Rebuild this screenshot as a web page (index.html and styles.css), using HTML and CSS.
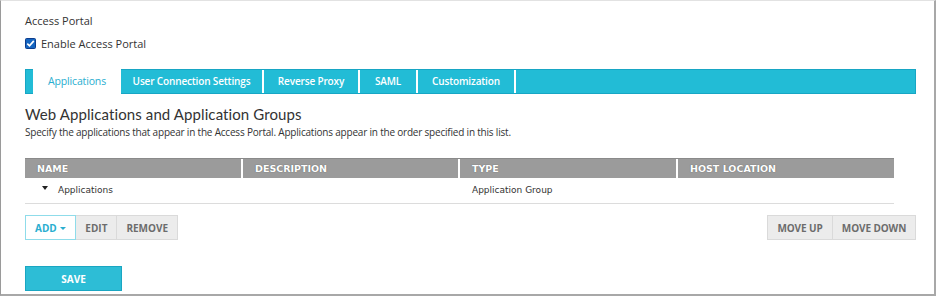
FILE: index.html
```html
<!DOCTYPE html>
<html>
<head>
<meta charset="utf-8">
<link rel="stylesheet" href="styles.css">
</head>
<body>
<div class="frame">
  <div class="title">Access Portal</div>
  <label class="check"><span class="box"><svg width="11" height="11" viewBox="0 0 11 11"><rect x="0.5" y="0.5" width="10" height="10" rx="1" fill="#1565c0" stroke="#0d3c8c"/><path d="M2.3 5.6 L4.5 7.8 L8.8 2.9" fill="none" stroke="#fff" stroke-width="1.7"/></svg></span>Enable Access Portal</label>

  <div class="tabs">
    <div class="tab active t1">Applications</div>
    <div class="tab t2">User Connection Settings</div>
    <div class="tab t3">Reverse Proxy</div>
    <div class="tab t4">SAML</div>
    <div class="tab t5">Customization</div>
  </div>

  <h2 class="heading">Web Applications and Application Groups</h2>
  <p class="desc">Specify the applications that appear in the Access Portal. Applications appear in the order specified in this list.</p>

  <div class="table">
    <div class="thead">
      <div class="th c1">NAME</div>
      <div class="th c2">DESCRIPTION</div>
      <div class="th c3">TYPE</div>
      <div class="th c4">HOST LOCATION</div>
    </div>
    <div class="row">
      <div class="td c1"><span class="caret"></span>Applications</div>
      <div class="td c2"></div>
      <div class="td c3">Application Group</div>
      <div class="td c4"></div>
    </div>
  </div>

  <div class="actions">
    <div class="group">
      <button class="btn add">ADD <span class="dcaret"></span></button>
      <button class="btn">EDIT</button>
      <button class="btn">REMOVE</button>
    </div>
    <div class="group">
      <button class="btn up">MOVE UP</button>
      <button class="btn down">MOVE DOWN</button>
    </div>
  </div>

  <button class="save">SAVE</button>
</div>
</body>
</html>
```
FILE: styles.css
```css
* { box-sizing: border-box; }
html, body { margin: 0; padding: 0; background: #fff; }
.frame {
  width: 936px;
  height: 296px;
  border-left: 1px solid #9a9a9a;
  border-top: 1px solid #e2e2e2;
  border-right: 2px solid #a8a8a8;
  border-bottom: 2px solid #a8a8a8;
  padding: 12px 18px 0 24px;
  font-family: "Open Sans", sans-serif;
  color: #333;
}
.title { font-size: 11px; line-height: 15px; }
.check {
  display: flex; align-items: center;
  margin-top: 8px;
  font-size: 11px; line-height: 15px;
}
.box { display: inline-flex; width: 11px; height: 11px; margin-right: 5px; }
.tabs {
  display: flex;
  margin-top: 18px;
  height: 25px;
  background: #22bcd6;
  border: 1px solid #17a6c4;
  padding-left: 7px;
}
.tab {
  color: #fff;
  font-size: 10px;
  font-weight: 600;
  letter-spacing: -0.15px;
  line-height: 23px;
  text-align: center;
  border-right: 2px solid #fff;
}
.t1 { width: 88px; }
.t2 { width: 143px; }
.t3 { width: 96px; }
.t4 { width: 58px; }
.t5 { width: 98px; }
.tab.active {
  background: #fff;
  color: #2aaed0;
  font-weight: 400;
  font-size: 10.5px;
  border-right: none;
  margin-top: -1px;
  margin-bottom: -1px;
  line-height: 25px;
}
.heading {
  margin: 10px 0 0;
  font-family: "Lato", sans-serif;
  font-weight: 400;
  font-size: 15px;
  letter-spacing: 0.1px;
  line-height: 20px;
  color: #333;
}
.desc { margin: 1px 0 0; font-size: 10px; letter-spacing: -0.2px; line-height: 14px; }
.table { width: 869px; margin-top: 19px; font-family: "DejaVu Sans", Verdana, sans-serif; }
.thead { display: flex; background: #9b9b9b; height: 20px; border-top: 1px solid #8a8a8a; }
.th {
  color: #fff; font-weight: 700; font-size: 9.5px; line-height: 19px;
  padding-left: 12px; border-right: 2px solid #fff;
  text-shadow: 0 0 1px #555;
}
.th.c4 { border-right: none; }
.c1 { width: 218px; }
.c2 { width: 217px; }
.c3 { width: 218px; }
.c4 { flex: 1; }
.row { display: flex; height: 26px; border-bottom: 1px solid #dcdcdc; }
.td { font-size: 9px; line-height: 23px; color: #333; padding-left: 12px; display: flex; align-items: center; }
.td.c1 { padding-left: 17px; }
.caret {
  width: 0; height: 0; margin-right: 10px; margin-top: -6px;
  border-left: 3.5px solid transparent; border-right: 3.5px solid transparent;
  border-top: 4px solid #222;
}
.actions { display: flex; justify-content: space-between; margin-top: 11px; }
.group { display: flex; }
.btn {
  font-family: "Open Sans", sans-serif;
  font-size: 10px; font-weight: 700; color: #6c6c6c;
  background: #ececec; border: 1px solid #dadada; border-left-width: 0;
  height: 25px; padding: 0 9px; margin: 0;
}
.group .btn:first-child { border-left-width: 1px; }
.btn.up { width: 66px; padding: 0; letter-spacing: -0.1px; }
.btn.down { width: 83px; padding: 0; letter-spacing: -0.1px; }
.btn.add { background: #fff; border: 1px solid #8fdcea; color: #2aaed0; padding: 0 9px; }
.dcaret {
  display: inline-block; width: 0; height: 0; vertical-align: middle; margin-left: 1px;
  border-left: 3px solid transparent; border-right: 3px solid transparent; border-top: 3px solid #2aaed0;
}
.save {
  display: block; margin-top: 26px;
  width: 97px; height: 25px;
  background: #2dbdd6; border: 1px solid #1aa6c2;
  color: #fff; font-family: "Open Sans", sans-serif; font-weight: 700; font-size: 10px;
}
```
